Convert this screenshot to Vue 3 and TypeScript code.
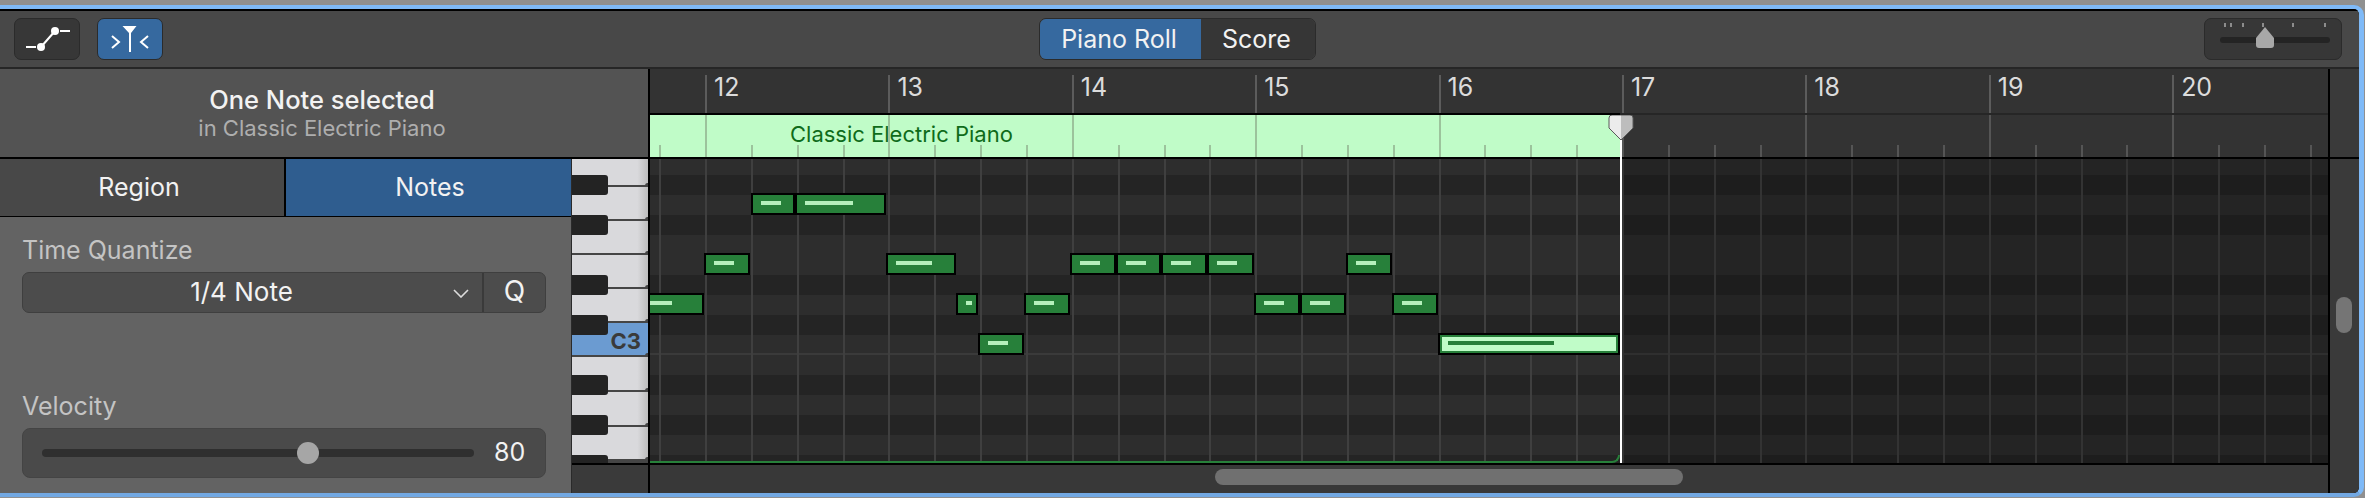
<script setup lang="ts">
// --- Interfaces ---
interface Note {
  x: number
  y: number
  w: number
  bar: number
  cut?: boolean
  selected?: boolean
}

// --- Timeline geometry (px, relative to the editor's left edge) ---
const firstBarX = 55
const barWidth = 183.4
const beatWidth = barWidth / 4

const bars = [12, 13, 14, 15, 16, 17, 18, 19, 20]

const barLines = bars.map(b => firstBarX + (b - 12) * barWidth)

const beatLines: number[] = []
for (let i = -1; i < 36; i++) {
  if (i % 4 !== 0) beatLines.push(firstBarX + i * beatWidth)
}

// --- Keyboard ---
const whiteKeys = [
  { h: 28 }, { h: 34 }, { h: 34 }, { h: 34 }, { h: 34 },
  { h: 34, label: 'C3' },
  { h: 35 }, { h: 35 }, { h: 34 }, { h: 2 }
]
const blackKeys = [16, 56, 116, 156, 216, 256, 296]

// --- Grid rows, top to bottom ---
const rows = [
  { h: 16, dark: false }, { h: 20, dark: true }, { h: 20, dark: false }, { h: 20, dark: true },
  { h: 40, dark: false }, { h: 20, dark: true }, { h: 20, dark: false }, { h: 20, dark: true },
  { h: 40, dark: false }, { h: 20, dark: true }, { h: 20, dark: false }, { h: 20, dark: true },
  { h: 20, dark: false }, { h: 8, dark: true }
]

// --- Notes (y is relative to the grid top) ---
const notes: Note[] = [
  { x: 101, y: 34, w: 44, bar: 20 },
  { x: 145, y: 34, w: 91, bar: 48 },
  { x: 54, y: 94, w: 46, bar: 20 },
  { x: 236, y: 94, w: 70, bar: 36 },
  { x: 420, y: 94, w: 46, bar: 20 },
  { x: 466, y: 94, w: 45, bar: 20 },
  { x: 511, y: 94, w: 46, bar: 20 },
  { x: 557, y: 94, w: 47, bar: 20 },
  { x: 696, y: 94, w: 46, bar: 20 },
  { x: 0, y: 134, w: 54, bar: 22, cut: true },
  { x: 306, y: 134, w: 22, bar: 6 },
  { x: 374, y: 134, w: 46, bar: 20 },
  { x: 604, y: 134, w: 46, bar: 20 },
  { x: 650, y: 134, w: 46, bar: 20 },
  { x: 742, y: 134, w: 46, bar: 20 },
  { x: 328, y: 174, w: 46, bar: 20 },
  { x: 788, y: 174, w: 182, bar: 106, selected: true }
]

const zoomTicks = [2223, 2229, 2241, 2261, 2291, 2323].map(x => x - 2204)
</script>

<template>
  <div class="window">
    <header class="toolbar">
      <button class="tool-btn">
        <svg width="46" height="24" viewBox="0 0 46 24">
          <path d="M2 20H12M17 20L31 4M36 4H46" stroke="#fff" stroke-width="2" fill="none" />
          <circle cx="17" cy="20" r="4" fill="#fff" />
          <circle cx="31" cy="4" r="4" fill="#fff" />
        </svg>
      </button>
      <button class="tool-btn active">
        <svg width="38" height="28" viewBox="0 0 38 28">
          <path d="M11.5 1H25.5L20 8V11H18V8Z" fill="#fff" />
          <path d="M19 8V27" stroke="#fff" stroke-width="2" />
          <path d="M1 11L8 17L1 23M37 11L30 17L37 23" stroke="#fff" stroke-width="2" fill="none" />
        </svg>
      </button>

      <div class="segmented">
        <span class="segment piano-roll">Piano Roll</span>
        <span class="segment score">Score</span>
      </div>

      <div class="zoom-slider">
        <i v-for="t in zoomTicks" :key="t" class="zoom-tick" :style="{ left: t + 'px' }"></i>
        <div class="zoom-track"></div>
        <svg class="zoom-thumb" width="18" height="21" viewBox="0 0 18 21">
          <path d="M9 0L18 11V18Q18 21 15 21H3Q0 21 0 18V11Z" fill="#a8a8a8" />
        </svg>
      </div>
    </header>

    <div class="main">
      <aside class="left-col">
        <div class="selection-info">
          <div class="title">One Note selected</div>
          <div class="subtitle">in Classic Electric Piano</div>
        </div>

        <div class="left-lower">
          <div class="inspector">
            <div class="tabs">
              <div class="tab region-tab">Region</div>
              <div class="tab active">Notes</div>
            </div>

            <div class="inspector-body">
              <label class="field-label">Time Quantize</label>
              <div class="quantize">
                <div class="quantize-value">
                  <span>1/4 Note</span>
                  <svg class="chevron" width="16" height="9" viewBox="0 0 16 9">
                    <path d="M1 1L8 8L15 1" stroke="#ddd" stroke-width="1.6" fill="none" />
                  </svg>
                </div>
                <div class="quantize-q">Q</div>
              </div>

              <label class="field-label velocity-label">Velocity</label>
              <div class="velocity">
                <div class="velocity-track">
                  <span class="velocity-thumb"></span>
                </div>
                <span class="velocity-value">80</span>
              </div>
            </div>
          </div>

          <div class="keyboard-col">
            <div class="keyboard">
              <div
                v-for="(key, i) in whiteKeys"
                :key="i"
                class="white-key"
                :class="{ c3: key.label }"
                :style="{ height: key.h + 'px' }"
              >{{ key.label }}</div>
              <i v-for="top in blackKeys" :key="top" class="black-key" :style="{ top: top + 'px' }"></i>
            </div>
            <div class="keyboard-foot"></div>
          </div>
        </div>
      </aside>

      <section class="editor">
        <div class="ruler">
          <div v-for="b in bars" :key="b" class="ruler-bar">{{ b }}</div>
        </div>

        <div class="region-strip">
          <div class="region">
            <span class="region-name">Classic Electric Piano</span>
          </div>
          <i v-for="x in barLines" :key="x" class="strip-bar" :class="{ past: x > 970 }" :style="{ left: x + 'px' }"></i>
          <i v-for="x in beatLines" :key="x" class="strip-beat" :class="{ past: x > 970 }" :style="{ left: x + 'px' }"></i>
        </div>

        <div class="grid">
          <div v-for="(row, i) in rows" :key="i" class="grid-row" :class="{ dark: row.dark }" :style="{ height: row.h + 'px' }"></div>
          <i class="c-line"></i>
          <i v-for="x in barLines" :key="x" class="grid-line" :style="{ left: x + 'px' }"></i>
          <i v-for="x in beatLines" :key="x" class="grid-line" :style="{ left: x + 'px' }"></i>
          <div class="after-region"></div>
          <div class="region-edge"></div>
          <div
            v-for="n in notes"
            :key="n.x + '-' + n.y"
            class="note"
            :class="{ selected: n.selected, cut: n.cut }"
            :style="{ left: n.x + 'px', top: n.y + 'px', width: n.w + 'px' }"
          >
            <span class="note-velocity" :style="{ width: n.bar + 'px' }"></span>
          </div>
        </div>

        <div class="hscroll">
          <div class="hscroll-thumb"></div>
        </div>

        <div class="playhead">
          <svg class="playhead-cap" width="26" height="25" viewBox="0 0 26 25">
            <path d="M13 25L1 13V3Q1 0 4 0H13Z" fill="#ececec" />
            <path d="M13 25L25 13V3Q25 0 22 0H13Z" fill="#bdbdbd" />
            <path d="M13 25L1 13V3Q1 0 4 0H22Q25 0 25 3V13Z" fill="none" stroke="#5a5a5a" stroke-width="1" />
          </svg>
        </div>
      </section>

      <aside class="right-col">
        <div class="right-top"></div>
        <div class="vscroll">
          <div class="vscroll-thumb"></div>
        </div>
        <div class="corner"></div>
      </aside>
    </div>
  </div>
</template>

<style scoped>
.window {
  box-sizing: border-box;
  width: 2364px;
  height: 492px;
  margin-top: 5px;
  border-top: 4px solid #7fbaf8;
  border-right: 5px solid #7fbaf8;
  border-bottom: 4px solid #72a8e2;
  border-radius: 0 10px 10px 0;
  background: #000;
  display: flex;
  flex-direction: column;
  overflow: hidden;
  font-family: Inter, "Liberation Sans", sans-serif;
  color: #f2f2f2;
}

/* --- Toolbar --- */
.toolbar {
  box-sizing: border-box;
  height: 60px;
  flex: none;
  display: flex;
  align-items: center;
  padding: 0 17px 0 14px;
  background: #484848;
  border-top: 2px solid #000;
  border-bottom: 2px solid #262626;
}

.tool-btn {
  box-sizing: border-box;
  width: 66px;
  height: 42px;
  padding: 0;
  border: 1px solid #2b2b2b;
  border-radius: 7px;
  background: #373737;
  display: flex;
  align-items: center;
  justify-content: center;
}

.tool-btn.active {
  margin-left: 17px;
  background: #36699f;
}

.segmented {
  margin-left: 876px;
  height: 42px;
  display: flex;
  border: 1px solid #2b2b2b;
  box-sizing: border-box;
  border-radius: 7px;
  overflow: hidden;
  font-size: 25px;
}

.segment {
  box-sizing: border-box;
  display: flex;
  align-items: center;
  justify-content: center;
  padding-right: 3px;
}

.piano-roll {
  width: 161px;
  background: #36699f;
}

.score {
  width: 114px;
  background: #363636;
}

.zoom-slider {
  position: relative;
  box-sizing: border-box;
  margin-left: auto;
  width: 138px;
  height: 42px;
  border: 1px solid #2b2b2b;
  border-radius: 7px;
  background: #373737;
}

.zoom-tick {
  position: absolute;
  top: 4px;
  width: 2px;
  height: 4px;
  background: #8c8c8c;
}

.zoom-track {
  position: absolute;
  left: 15px;
  right: 11px;
  top: 18px;
  height: 6px;
  border-radius: 3px;
  background: #242424;
}

.zoom-thumb {
  position: absolute;
  left: 51px;
  top: 8px;
}

/* --- Layout --- */
.main {
  flex: 1;
  display: flex;
  min-height: 0;
}

.left-col {
  flex: none;
  width: 650px;
  display: flex;
  flex-direction: column;
}

.selection-info {
  box-sizing: border-box;
  height: 90px;
  flex: none;
  width: 648px;
  padding: 16px 4px 0 0;
  background: #535353;
  border-bottom: 2px solid #000;
  text-align: center;
  margin-right: 2px;
}

.title {
  font-size: 25.5px;
  font-weight: 500;
  line-height: 30px;
}

.subtitle {
  font-size: 22px;
  line-height: 27px;
  color: #aeaeae;
}

.left-lower {
  flex: 1;
  display: flex;
  min-height: 0;
}

/* --- Inspector --- */
.inspector {
  box-sizing: border-box;
  width: 572px;
  flex: none;
  display: flex;
  flex-direction: column;
  border-right: 1px solid #2a2a2a;
  background: #636363;
}

.tabs {
  box-sizing: border-box;
  height: 58px;
  flex: none;
  display: flex;
  border-bottom: 1px solid #000;
  font-size: 25px;
}

.tab {
  box-sizing: border-box;
  flex: 1;
  display: flex;
  align-items: center;
  justify-content: center;
  padding: 0 0 2px 3px;
  background: #484848;
}

.region-tab {
  flex: none;
  width: 286px;
  border-right: 2px solid #000;
  padding: 0 6px 2px 0;
}

.tab.active {
  background: #2f5d8f;
}

.inspector-body {
  padding: 18px 25px 0 22px;
}

.field-label {
  display: block;
  font-size: 25px;
  line-height: 30px;
  color: #c4c4c4;
}

.velocity-label {
  margin-top: 78px;
}

.quantize {
  box-sizing: border-box;
  margin-top: 7px;
  height: 41px;
  display: flex;
  border: 1px solid #3f3f3f;
  border-radius: 7px;
  background: #4c4c4c;
  font-size: 26px;
}

.quantize-value {
  position: relative;
  flex: 1;
  display: flex;
  align-items: center;
  justify-content: center;
  padding: 0 22px 2px 0;
  border-right: 2px solid #3a3a3a;
}

.chevron {
  position: absolute;
  right: 13px;
  top: 16px;
}

.quantize-q {
  width: 61px;
  display: flex;
  align-items: center;
  justify-content: center;
  padding-bottom: 3px;
  font-size: 28px;
}

.velocity {
  box-sizing: border-box;
  margin-top: 7px;
  height: 50px;
  display: flex;
  align-items: center;
  gap: 20px;
  padding: 0 19px;
  border: 1px solid #444;
  border-radius: 8px;
  background: #4a4a4a;
}

.velocity-track {
  position: relative;
  width: 432px;
  height: 8px;
  border-radius: 4px;
  background: #2f2f2f;
}

.velocity-thumb {
  position: absolute;
  left: 255px;
  top: -7px;
  width: 22px;
  height: 22px;
  border-radius: 50%;
  background: #a6a6a6;
}

.velocity-value {
  font-size: 25px;
  line-height: 28px;
  margin-top: -2px;
}

/* --- Keyboard --- */
.keyboard-col {
  flex: 1;
  display: flex;
  flex-direction: column;
  border-right: 2px solid #000;
}

.keyboard {
  position: relative;
  height: 304px;
  flex: none;
  overflow: hidden;
}

.white-key {
  box-sizing: border-box;
  position: relative;
  border-bottom: 2px solid #454545;
  background: linear-gradient(90deg, #d9d9dc 86%, #bdbdbd 100%);
  color: #3a3a3a;
  font-size: 22px;
  font-weight: 700;
  line-height: 32px;
  text-align: right;
  padding-right: 7px;
}

.white-key::after {
  content: '';
  position: absolute;
  right: -2px;
  bottom: -4px;
  width: 5px;
  height: 6px;
  border-radius: 50%;
  background: #454545;
}

.white-key.c3 {
  background: #6b9bd1;
  line-height: 36px;
}

.black-key {
  position: absolute;
  left: 0;
  width: 36px;
  height: 20px;
  border-radius: 0 3px 3px 0;
  background: #232323;
}

.keyboard-foot {
  flex: 1;
  background: #3a3a3a;
  border-top: 2px solid #000;
}

/* --- Editor --- */
.editor {
  position: relative;
  width: 1678px;
  flex: none;
  display: flex;
  flex-direction: column;
}

.ruler {
  box-sizing: border-box;
  height: 46px;
  flex: none;
  display: flex;
  padding: 6px 0 0 55px;
  background: #333;
  border-bottom: 2px solid #262626;
}

.ruler-bar {
  box-sizing: border-box;
  flex: none;
  width: 183.4px;
  padding-left: 7px;
  border-left: 2px solid #5c5c5c;
  font-size: 25px;
  line-height: 24px;
  color: #dcdcdc;
}

.region-strip {
  position: relative;
  box-sizing: border-box;
  height: 44px;
  flex: none;
  background: #333;
  border-bottom: 2px solid #000;
}

.region {
  box-sizing: border-box;
  width: 970px;
  height: calc(100% + 2px);
  margin-top: -2px;
  border-top: 2px solid #000;
  background: #c0fcc8;
}

.region-name {
  display: block;
  padding: 6px 0 0 140px;
  font-size: 22px;
  line-height: 26px;
  color: #0e6b1a;
}

.strip-bar,
.strip-beat {
  position: absolute;
  width: 2px;
  bottom: 0;
  background: #9cc39c;
}

.strip-bar {
  top: 0;
}

.strip-beat {
  height: 12px;
}

.strip-bar.past,
.strip-beat.past {
  background: #555;
}

.grid {
  position: relative;
  height: 304px;
  flex: none;
  overflow: hidden;
}

.grid-row {
  background: #2d2d2d;
}

.grid-row.dark {
  background: #242424;
}

.c-line {
  position: absolute;
  left: 0;
  right: 0;
  top: 194px;
  height: 2px;
  background: #3a3a3a;
}

.grid-line {
  position: absolute;
  top: 0;
  bottom: 0;
  width: 2px;
  background: #3f3f3f;
}

.after-region {
  position: absolute;
  left: 971px;
  right: 0;
  top: 0;
  bottom: 0;
  background: rgba(0, 0, 0, 0.18);
}

.region-edge {
  position: absolute;
  left: 0;
  width: 970px;
  bottom: 0;
  height: 8px;
  box-sizing: border-box;
  border-right: 2px solid #27803a;
  border-bottom: 2px solid #27803a;
  border-bottom-right-radius: 8px;
}

.note {
  position: absolute;
  box-sizing: border-box;
  height: 22px;
  padding: 6px 0 0 8px;
  border: 2px solid #000;
  background: #27803a;
}

.note.cut {
  border-left: 0;
  padding-left: 0;
}

.note.selected {
  background: #c0fcc8;
  box-shadow: inset 0 0 0 2px #27803a;
}

.note-velocity {
  display: block;
  height: 4px;
  background: #b5f0bc;
}

.note.selected .note-velocity {
  background: #27803a;
}

.hscroll {
  flex: 1;
  background: #383838;
  border-top: 2px solid #000;
  padding-top: 4px;
}

.hscroll-thumb {
  margin-left: 565px;
  width: 468px;
  height: 16px;
  border-radius: 8px;
  background: #707070;
}

.playhead {
  position: absolute;
  left: 970px;
  top: 46px;
  width: 2px;
  height: 348px;
  background: #fff;
}

.playhead-cap {
  position: absolute;
  left: -12px;
  top: 0;
}

/* --- Right strip --- */
.right-col {
  flex: 1;
  display: flex;
  flex-direction: column;
  border-left: 2px solid #000;
  background: #3a3a3a;
}

.right-top {
  height: 88px;
  flex: none;
  border-bottom: 2px solid #000;
}

.vscroll {
  height: 304px;
  flex: none;
  padding: 138px 6px 0;
}

.vscroll-thumb {
  width: 16px;
  height: 36px;
  border-radius: 8px;
  background: #757575;
}

.corner {
  flex: 1;
  background: #2e2e2e;
}
</style>

<style>
html,
body {
  margin: 0;
  background: #909090;
}
</style>
